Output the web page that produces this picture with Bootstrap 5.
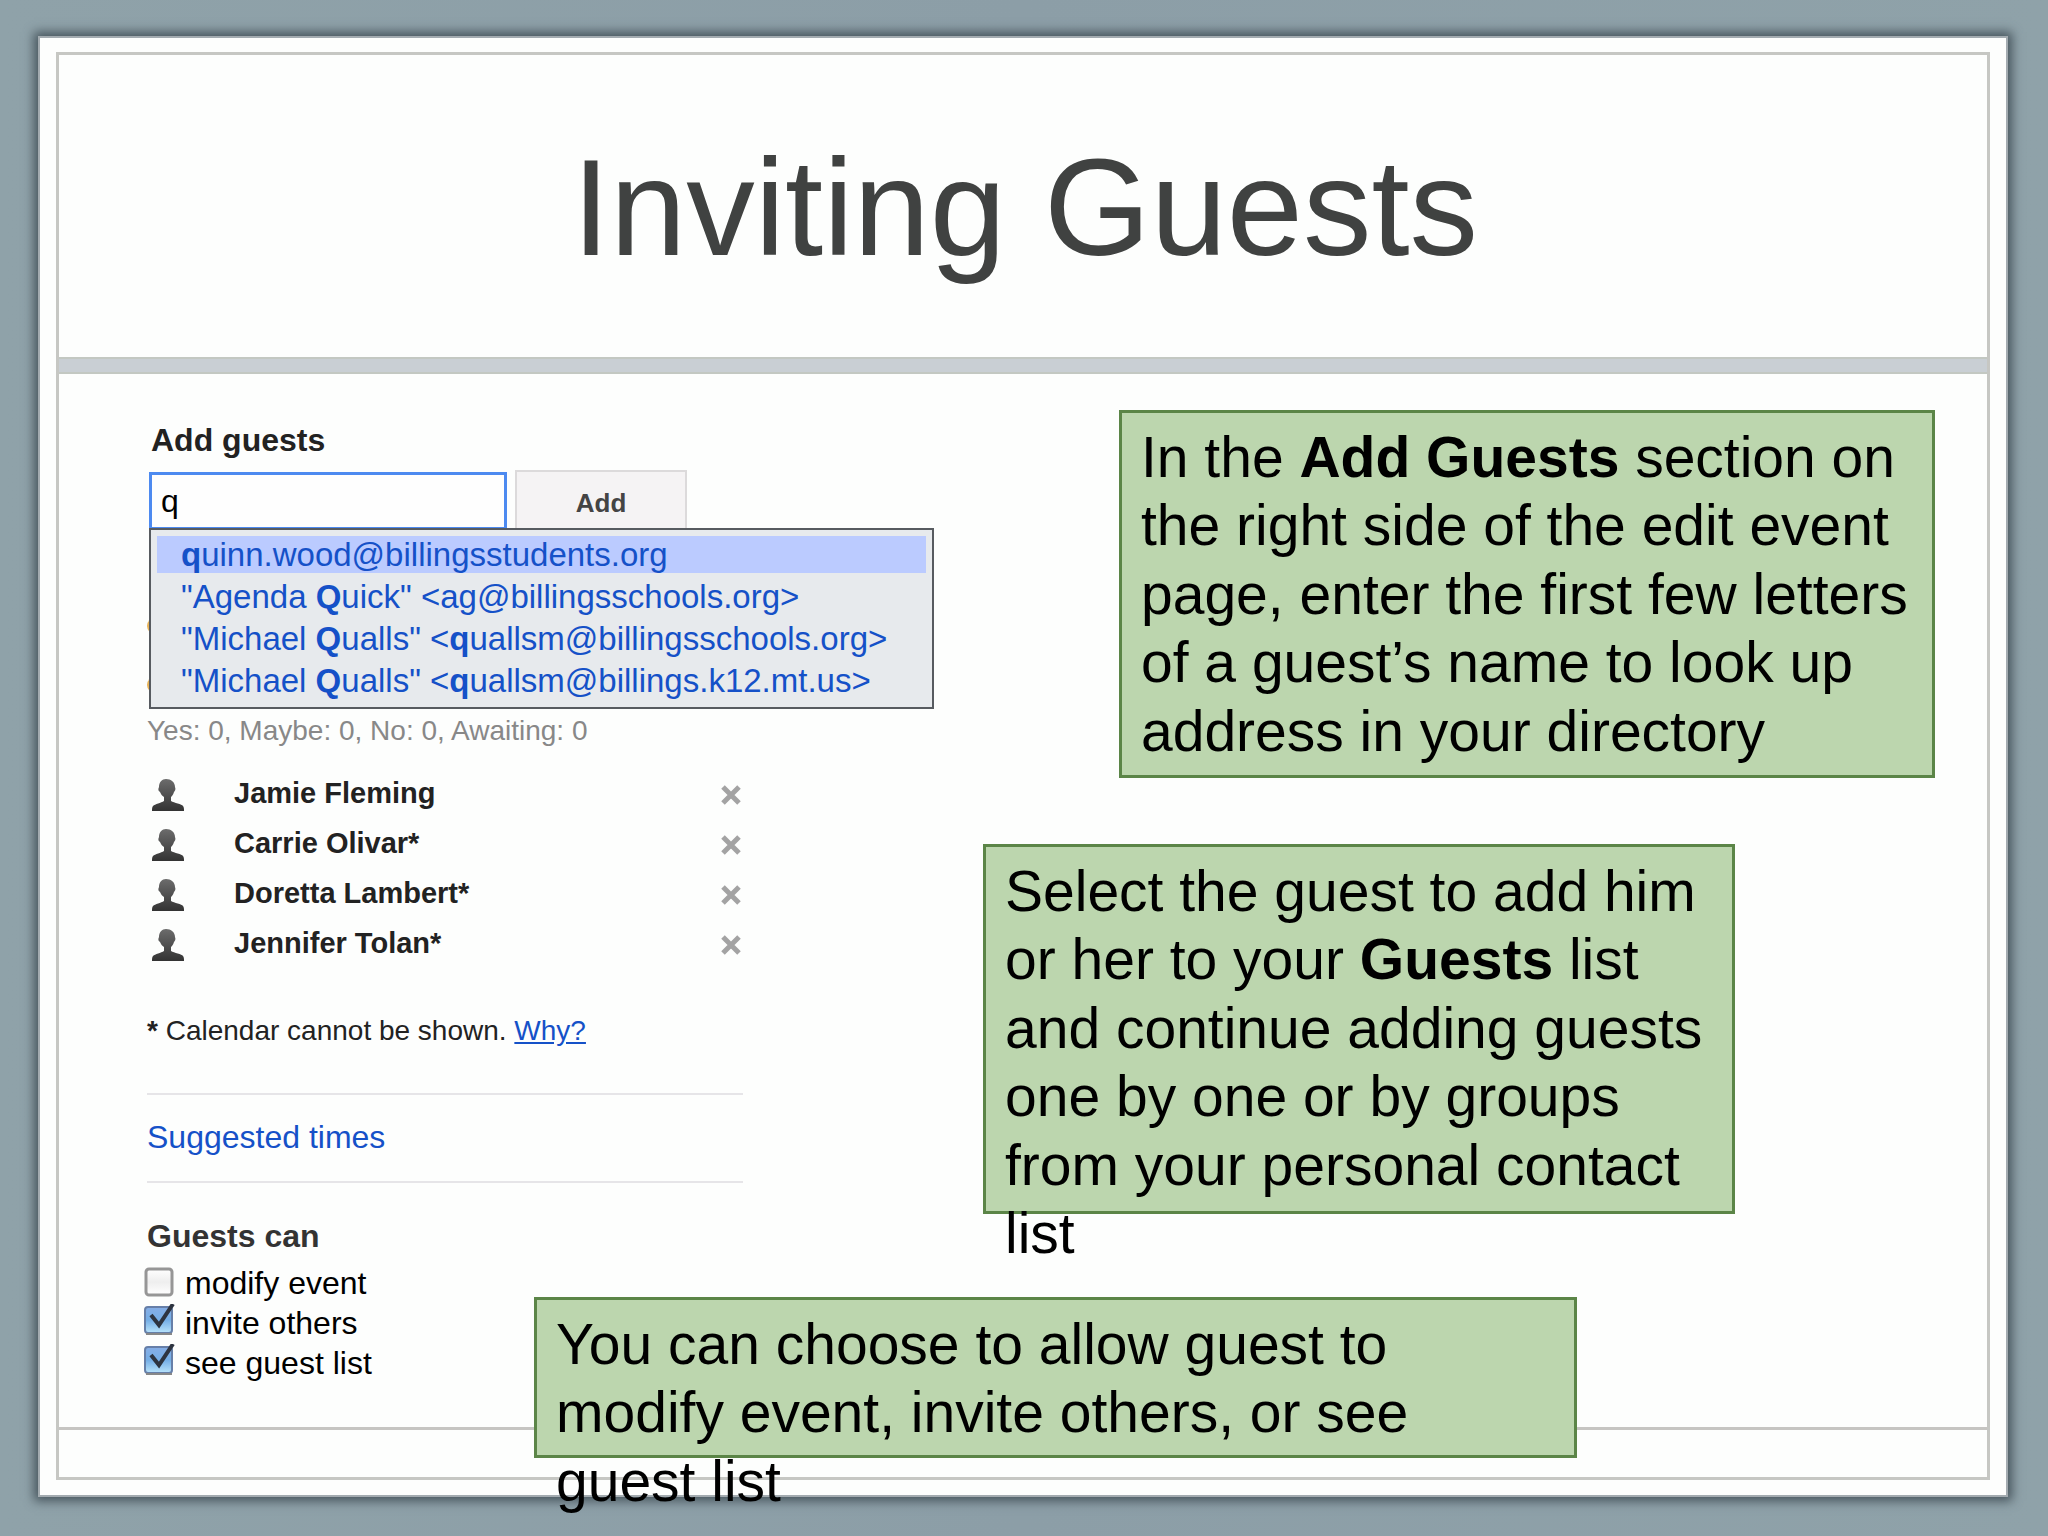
<!DOCTYPE html>
<html lang="en">
<head>
<meta charset="utf-8">
<meta name="viewport" content="width=device-width, initial-scale=1">
<title>Inviting Guests</title>
<link rel="stylesheet" href="https://cdn.jsdelivr.net/npm/bootstrap@5.3.0/dist/css/bootstrap.min.css">
<style>
  body {
    font-family: "Liberation Sans", Arial, sans-serif;
    color: #000;
    background: linear-gradient(90deg, #8fa2a9, #8c9ea7 50%, #8fa2a9);
    padding: 36px 40px 39px 38px;
  }
  a, .suggest-list button { color: #1551c8; }
  .slide-sheet {
    background: #fdfefd;
    border: 2px solid #a3abb0;
    padding: 14px 16px 15px;
    box-shadow: 0 0 10px 4px #47555d;
  }
  .slide-frame { border: 3px solid #c6c7c3; }
  .slide-head { height: 302px; padding: 4px 0 0 4px; }
  .slide-head h1 { font-size: 137px; line-height: 1.2; color: #404241; }
  .slide-band { height: 17px; background: #c9cfd4; border: solid #c3c8c2; border-width: 2px 0; }
  .slide-foot { height: 50px; border-top: 3px solid #c6c5c2; }

  /* guest panel */
  .guest-panel { width: 596px; margin: 46px 0 0 88px; font-size: 32px; line-height: 40px; }
  .panel-title { font-size: 32px; line-height: 40px; font-weight: 700; color: #222; }
  label.panel-title { padding-left: 4px; }
  .add-row { height: 60px; margin: 10px 0 0 2px; gap: 8px; }
  .guest-input {
    width: 358px; height: 58px; padding: 0 9px; border: 3px solid #4d8af0; border-radius: 0;
    font-size: 32px; color: #000; background: #fefefe;
  }
  .add-btn {
    width: 172px; height: 60px; border: 2px solid #dcdadb; border-radius: 0; padding: 6px 0 0;
    background: #f5f3f4; color: #444; font-size: 26px; font-weight: 700;
  }
  .suggest-list {
    top: 58px; left: 0; width: 785px; z-index: 2; gap: 5px;
    padding: 6px 6px 8px; background: #e7eaed; border: 2px solid #575b60;
  }
  .suggest-list button {
    display: block; width: 100%; border: 0; background: none; text-align: left;
    padding: 0 0 0 24px; font-size: 33px; line-height: 37px; white-space: nowrap;
  }
  .suggest-list button.chosen { background: #bbcbff; }
  .peek-marks { height: 181px; padding-top: 88px; gap: 43px; }
  .peek-marks span { width: 16px; height: 16px; border-radius: 8px; background: #e8b45a; }
  .muted-line { font-size: 28px; color: #888; }
  .guest-rows { margin-top: 19px; }
  .guest-rows li { height: 50px; padding: 0 2px 0 5px; }
  .guest-rows .who { margin-left: 50px; padding-bottom: 4px; font-size: 29px; font-weight: 700; color: #222; }
  .guest-rows button { border: 0; background: none; padding: 0; line-height: 0; }
  .note-line { font-size: 28px; color: #222; margin-top: 41px; }
  .times-block { margin-top: 42px; padding: 22px 0 24px; border: solid #e6e5e8; border-width: 2px 0; }
  .rights { margin-top: 33px; }
  .rights .panel-title { color: #333; margin-bottom: 7px; }
  .tick-row { height: 40px; gap: 8px; margin-left: -4px; }
  .tick-box {
    appearance: none; width: 34px; height: 38px; margin: 0;
    background: url("data:image/svg+xml,%3Csvg xmlns='http://www.w3.org/2000/svg' viewBox='0 0 34 38'%3E%3Cdefs%3E%3ClinearGradient id='g' x2='0' y2='1'%3E%3Cstop stop-color='%23fff'/%3E%3Cstop offset='.5' stop-color='%23eee'/%3E%3Cstop offset='1' stop-color='%23fff'/%3E%3C/linearGradient%3E%3C/defs%3E%3Crect x='3' y='5' width='26' height='26' rx='3' fill='url(%23g)' stroke='%23969696' stroke-width='3'/%3E%3C/svg%3E") center / 100% no-repeat;
  }
  .tick-box:checked {
    background-image: url("data:image/svg+xml,%3Csvg xmlns='http://www.w3.org/2000/svg' viewBox='0 0 34 38'%3E%3Cdefs%3E%3ClinearGradient id='g' x2='0' y2='1'%3E%3Cstop stop-color='%2386aee6'/%3E%3Cstop offset='.5' stop-color='%2374aee6'/%3E%3Cstop offset='1' stop-color='%23b9e4fb'/%3E%3C/linearGradient%3E%3C/defs%3E%3Crect x='2' y='3' width='27' height='26' rx='3' fill='url(%23g)' stroke='%23667fa8' stroke-width='2'/%3E%3Cpath d='M3 30h26' stroke='%23888' stroke-width='2'/%3E%3Cpath d='M8 11l8 10L30 0' fill='none' stroke='%232d3440' stroke-width='4'/%3E%3C/svg%3E");
  }

  /* green notes */
  .notes-col { width: 952px; margin: 36px 52px 0 auto; gap: 66px; }
  .note-box {
    background: #bcd6ae; border: 3px solid #5b8547; padding: 10px 18px 0 19px;
    font-size: 57px; line-height: 1.2;
  }
  .note-a { width: 816px; height: 368px; }
  .note-b { width: 752px; height: 370px; }
  .note-c { width: 1043px; height: 161px; left: 475px; bottom: -31px; }
</style>
</head>
<body class="min-vh-100 d-flex flex-column">
<div class="slide-sheet flex-grow-1 d-flex flex-column">
  <div class="slide-frame flex-grow-1 d-flex flex-column">
    <header class="slide-head d-flex align-items-center justify-content-center">
      <h1 class="m-0 fw-normal">Inviting Guests</h1>
    </header>
    <div class="slide-band"></div>
    <main class="flex-grow-1 d-flex position-relative">
      <section class="guest-panel flex-shrink-0">
        <label class="panel-title d-block" for="guest">Add guests</label>
        <div class="add-row d-flex align-items-end position-relative">
          <input class="guest-input" id="guest" type="text" value="q">
          <button class="add-btn" type="button">Add</button>
          <div class="suggest-list position-absolute d-flex flex-column">
            <button type="button" class="chosen"><b>q</b>uinn.wood@billingsstudents.org</button>
            <button type="button">"Agenda <b>Q</b>uick" &lt;ag@billingsschools.org&gt;</button>
            <button type="button">"Michael <b>Q</b>ualls" &lt;<b>q</b>uallsm@billingsschools.org&gt;</button>
            <button type="button">"Michael <b>Q</b>ualls" &lt;<b>q</b>uallsm@billings.k12.mt.us&gt;</button>
          </div>
        </div>
        <div class="peek-marks d-flex flex-column" aria-hidden="true"><span></span><span></span></div>
        <div class="muted-line">Yes: 0, Maybe: 0, No: 0, Awaiting: 0</div>

        <svg class="position-absolute" width="0" height="0" aria-hidden="true">
          <defs>
            <linearGradient id="bustFill" x2="0" y2="1"><stop stop-color="#6c6c6c"/><stop offset="1" stop-color="#333"/></linearGradient>
            <symbol id="bust" viewBox="0 0 32 32"><path fill="url(#bustFill)" d="M14 0c5 0 9 3 9 8 1 2 0 4-1 5-1 3-2 4-3 5v4c3 2 11 3 12 5 1 1 1 3 1 5H0c0-2 0-4 1-5 2-2 8-3 11-5v-4c-2-1-3-3-4-5-2-1-2-3-1-5 0-5 3-8 7-8z"/></symbol>
            <symbol id="cross" viewBox="0 0 20 20"><path d="M2 2l16 16M18 2L2 18" stroke="#a3a3a3" stroke-width="5"/></symbol>
          </defs>
        </svg>
        <ul class="guest-rows list-unstyled mb-0">
          <li class="d-flex align-items-center"><svg width="32" height="32"><use href="#bust"/></svg><span class="who">Jamie Fleming</span><button class="ms-auto" type="button" aria-label="Remove"><svg width="20" height="20"><use href="#cross"/></svg></button></li>
          <li class="d-flex align-items-center"><svg width="32" height="32"><use href="#bust"/></svg><span class="who">Carrie Olivar*</span><button class="ms-auto" type="button" aria-label="Remove"><svg width="20" height="20"><use href="#cross"/></svg></button></li>
          <li class="d-flex align-items-center"><svg width="32" height="32"><use href="#bust"/></svg><span class="who">Doretta Lambert*</span><button class="ms-auto" type="button" aria-label="Remove"><svg width="20" height="20"><use href="#cross"/></svg></button></li>
          <li class="d-flex align-items-center"><svg width="32" height="32"><use href="#bust"/></svg><span class="who">Jennifer Tolan*</span><button class="ms-auto" type="button" aria-label="Remove"><svg width="20" height="20"><use href="#cross"/></svg></button></li>
        </ul>
        <div class="note-line"><b>*</b> Calendar cannot be shown. <a href="#why">Why?</a></div>
        <div class="times-block"><a class="text-decoration-none d-block" href="#times">Suggested times</a></div>
        <div class="rights" role="group" aria-labelledby="can">
          <div class="panel-title" id="can">Guests can</div>
          <div class="tick-row d-flex align-items-center"><input class="tick-box" type="checkbox" id="c1"><label for="c1">modify event</label></div>
          <div class="tick-row d-flex align-items-center"><input class="tick-box" type="checkbox" id="c2" checked><label for="c2">invite others</label></div>
          <div class="tick-row d-flex align-items-center"><input class="tick-box" type="checkbox" id="c3" checked><label for="c3">see guest list</label></div>
        </div>
      </section>
      <section class="notes-col d-flex flex-column flex-shrink-0">
        <div class="note-box note-a align-self-end">In the <b>Add Guests</b> section on the right side of the edit event page, enter the first few letters of a guest’s name to look up address in your directory</div>
        <div class="note-box note-b">Select the guest to add him or her to your <b>Guests</b> list and continue adding guests one by one or by groups from your personal contact list</div>
      </section>
      <div class="note-box note-c position-absolute">You can choose to allow guest to modify event, invite others, or see guest list</div>
    </main>
    <footer class="slide-foot"></footer>
  </div>
</div>
<script src="https://cdn.jsdelivr.net/npm/bootstrap@5.3.0/dist/js/bootstrap.bundle.min.js"></script>
</body>
</html>
